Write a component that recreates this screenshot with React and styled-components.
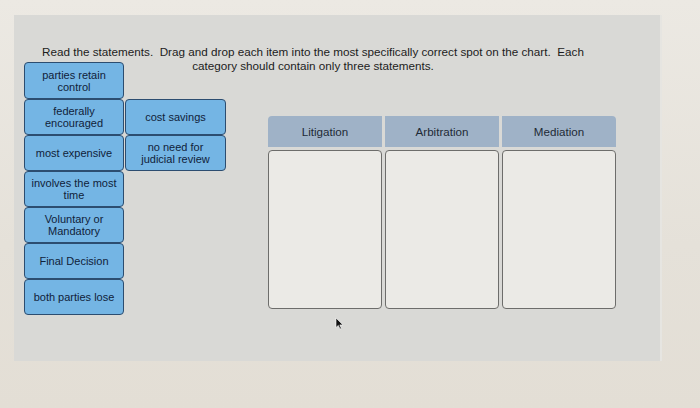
import React from 'react';
import styled, { createGlobalStyle } from 'styled-components';

const GlobalStyle = createGlobalStyle`
  html, body {
    margin: 0;
    padding: 0;
    height: 100%;
    background: linear-gradient(180deg, #ece9e3 0%, #e5e1d9 60%, #e3ded5 100%);
    font-family: "Liberation Sans", Arial, sans-serif;
  }
`;

const Screen = styled.div`
  width: 700px;
  height: 408px;
  padding: 15px 0 0 14px;
  box-sizing: border-box;
`;

const Panel = styled.div`
  position: relative;
  width: 648px;
  height: 346px;
  box-sizing: border-box;
  padding: 30px 10px 0 10px;
  background: #d9d9d6;
  border-right: 2px solid #e6e5e1;
`;

// each line only as wide as its words, so the card bank can tuck under line two
const Instructions = styled.div`
  margin: 0 0 -11px 17px;
  width: 544px;
  display: flex;
  flex-direction: column;
  align-items: center;
  font-size: 11.7px;
  line-height: 14px;
  color: #1c1c1c;
`;

const Line = styled.span`
  white-space: pre;
`;

const Workspace = styled.div`
  display: flex;
  align-items: flex-start;
  gap: 42px;
`;

const Bank = styled.div`
  display: grid;
  grid-template-columns: 100px 101px;
  grid-template-rows: 37px;
  grid-auto-rows: 36px;
  column-gap: 1px;
  row-gap: 0;
`;

const Card = styled.div`
  grid-column: ${p => p.$col};
  grid-row: ${p => p.$row};
  display: flex;
  align-items: center;
  justify-content: center;
  box-sizing: border-box;
  padding: 0 4px;
  background: #74b5e4;
  border: 1px solid #2c4d70;
  border-radius: 4px;
  font-size: 11px;
  line-height: 12px;
  color: #10223a;
  text-align: center;
  white-space: pre-line;
`;

const Chart = styled.div`
  margin-top: 54px;
  display: grid;
  grid-template-columns: repeat(3, 114px);
  column-gap: 3px;
  row-gap: 3px;
`;

const Heading = styled.div`
  height: 31px;
  display: flex;
  align-items: center;
  justify-content: center;
  background: #9fb2c7;
  border-radius: ${p => p.$round};
  font-size: 11.6px;
  color: #1e2a36;
`;

const Slot = styled.div`
  height: 157px;
  background: #ebeae6;
  border: 1px solid #6d6d6b;
  border-radius: 4px;
`;

const Pointer = styled.svg`
  position: absolute;
  left: 321px;
  top: 302px;
`;

const bank = [
  { text: 'parties retain\ncontrol', col: 1, row: 1 },
  { text: 'federally\nencouraged', col: 1, row: 2 },
  { text: 'most expensive', col: 1, row: 3 },
  { text: 'involves the most\ntime', col: 1, row: 4 },
  { text: 'Voluntary or\nMandatory', col: 1, row: 5 },
  { text: 'Final Decision', col: 1, row: 6 },
  { text: 'both parties lose', col: 1, row: 7 },
  { text: 'cost savings', col: 2, row: 2 },
  { text: 'no need for\njudicial review', col: 2, row: 3 },
];

const categories = ['Litigation', 'Arbitration', 'Mediation'];
const corners = ['4px 0 0 0', '0', '0 4px 0 0'];

export default function App() {
  return (
    <>
      <GlobalStyle />
      <Screen>
        <Panel>
          <Instructions>
            <Line>{'Read the statements.  Drag and drop each item into the most specifically correct spot on the chart.  Each'}</Line>
            <Line>category should contain only three statements.</Line>
          </Instructions>
          <Workspace>
            <Bank>
              {bank.map(c => (
                <Card key={c.text} $col={c.col} $row={c.row}>
                  {c.text}
                </Card>
              ))}
            </Bank>
            <Chart>
              {categories.map((name, i) => (
                <Heading key={name} $round={corners[i]}>{name}</Heading>
              ))}
              {categories.map(name => (
                <Slot key={name + '-slot'} />
              ))}
            </Chart>
          </Workspace>
          <Pointer width="9" height="13" viewBox="0 0 9 13">
            <path d="M1 1 L1 10.5 L3.3 8.4 L5 12 L6.4 11.4 L4.8 7.9 L8 7.9 Z" fill="#111" stroke="#fff" strokeWidth="0.6" />
          </Pointer>
        </Panel>
      </Screen>
    </>
  );
}
